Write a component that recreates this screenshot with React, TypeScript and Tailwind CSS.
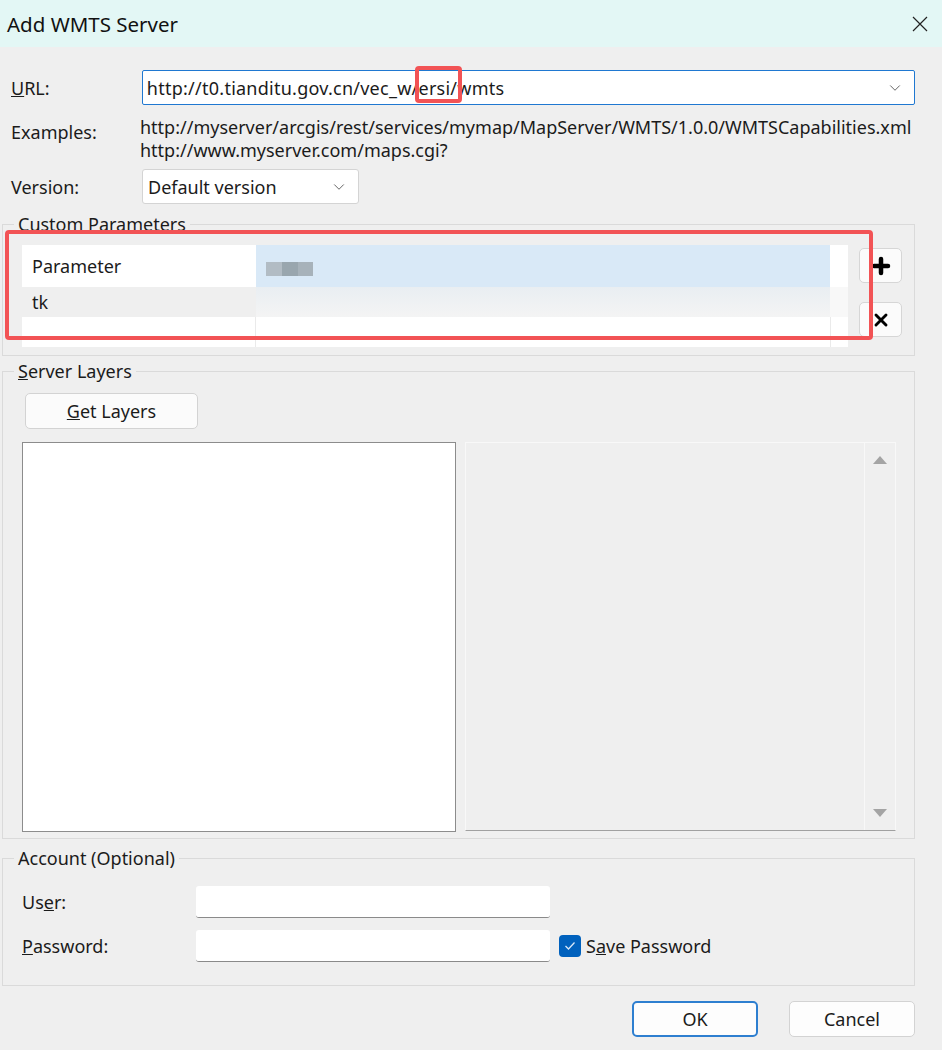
import { ChevronDown, Plus, X } from 'lucide-react';

const font = "font-['Noto_Sans','Open_Sans',sans-serif]";

function Group({ title, className, children }: { title: React.ReactNode; className?: string; children: React.ReactNode }) {
  return (
    <fieldset className={`border border-[#dadada] px-0 ${className ?? ''}`}>
      <legend className="ml-[11px] px-[4px] text-[18px] leading-[20px]">{title}</legend>
      {children}
    </fieldset>
  );
}

export default function App() {
  return (
    <div className={`w-[942px] h-[1050px] bg-[#efefef] text-[#1b1b1b] text-[18px] leading-[24px] ${font} overflow-hidden`}>
      {/* title bar */}
      <div className="h-[47px] bg-[#e3f7f5] flex items-center justify-between pl-[7px] pr-[14px]">
        <span className="text-[20.5px] text-[#111]">Add WMTS Server</span>
        <svg width="16" height="16" viewBox="0 0 16 16" className="text-[#222]">
          <path d="M1 1 L15 15 M15 1 L1 15" stroke="currentColor" strokeWidth="1.2" fill="none" />
        </svg>
      </div>

      <div className="relative pl-[2px] pr-[27px] pt-[23px]">
        {/* url */}
        <div className="flex items-center">
          <span className="w-[140px] pl-[9px]"><u>U</u>RL:</span>
          <div className="w-[774px] h-[35px] bg-white border border-[#1f78d1] rounded-[2px] flex items-center justify-between pl-[4px] pr-[10px]">
            <span className="tracking-[0.25px]">http://t0.tianditu.gov.cn/vec_w/ersi/wmts</span>
            <ChevronDown size={18} strokeWidth={1.2} className="text-[#555]" />
          </div>
        </div>

        {/* examples */}
        <div className="flex mt-[11px]">
          <span className="w-[138px] pl-[9px] pt-[4px]">Examples:</span>
          <div className="leading-[23px]">
            <div>http://myserver/arcgis/rest/services/mymap/MapServer/WMTS/1.0.0/WMTSCapabilities.xml</div>
            <div>http://www.myserver.com/maps.cgi?</div>
          </div>
        </div>

        {/* version */}
        <div className="flex items-center mt-[7px]">
          <span className="w-[140px] pl-[9px]">Version:</span>
          <div className="w-[217px] h-[35px] bg-white border border-[#d4d4d4] rounded-[3px] flex items-center justify-between pl-[5px] pr-[10px]">
            <span>Default version</span>
            <ChevronDown size={18} strokeWidth={1.2} className="text-[#555]" />
          </div>
        </div>

        <Group title="Custom Parameters" className="mt-[10px] pb-[8px]">
          <div className="flex items-start pl-[19px] pt-[11px]">
            <div className="w-[826px] h-[102px] flex flex-col">
              <div className="flex h-[42px]">
                <div className="w-[234px] bg-white flex items-center pl-[10px]">Parameter</div>
                <div className="w-[574px] bg-[#d9e9f7] pl-[10px] pt-[17px]">
                  <div className="flex">
                    <div className="w-[16px] h-[14px] bg-[#b2bcc4]" />
                    <div className="w-[16px] h-[14px] bg-[#99a6ae]" />
                    <div className="w-[15px] h-[14px] bg-[#a7b2ba]" />
                  </div>
                </div>
                <div className="w-[18px] bg-white" />
              </div>
              <div className="flex h-[30px]">
                <div className="w-[234px] bg-[#efefef] flex items-center pl-[10px]">tk</div>
                <div className="w-[574px] bg-gradient-to-b from-[#e9eef2] to-[#f4f4f4]" />
                <div className="w-[18px] bg-[#f8f8f8]" />
              </div>
              <div className="flex h-[30px]">
                <div className="w-[234px] bg-white border-r border-[#eaeaea]" />
                <div className="w-[574px] bg-white" />
                <div className="w-[18px] bg-white border-l border-[#eaeaea]" />
              </div>
            </div>
            <div className="ml-[11px] mt-[3px] flex flex-col gap-[19px]">
              <button className="w-[43px] h-[35px] bg-[#fbfbfb] border border-[#d6d6d6] rounded-[5px] flex items-center justify-center">
                <Plus size={24} strokeWidth={4.5} className="text-black" />
              </button>
              <button className="w-[43px] h-[35px] bg-[#fbfbfb] border border-[#d6d6d6] rounded-[5px] flex items-center justify-center">
                <X size={20} strokeWidth={3.5} className="text-black" />
              </button>
            </div>
          </div>
        </Group>

        <Group title={<><u>S</u>erver Layers</>} className="mt-[5px] pb-[6px]">
          <div className="pl-[22px] pt-[12px]">
            <button className="w-[173px] h-[36px] bg-[#fbfbfb] border border-[#d3d3d3] rounded-[5px]">
              <u>G</u>et Layers
            </button>
          </div>
          <div className="flex pl-[19px] mt-[13px] gap-[9px]">
            <div className="w-[434px] h-[390px] bg-white border border-[#8c8c8c]" />
            <div className="w-[431px] h-[389px] border border-[#f8f8f8] border-b-[#a0a0a0] flex justify-end">
              <div className="w-[31px] border-l border-[#f8f8f8] flex flex-col items-center justify-between py-[12px]">
                <svg width="16" height="10" viewBox="0 0 16 10"><path d="M8 1 L15 9 H1 Z" fill="#a4a4a4" /></svg>
                <svg width="16" height="10" viewBox="0 0 16 10"><path d="M1 1 H15 L8 9 Z" fill="#a4a4a4" /></svg>
              </div>
            </div>
          </div>
        </Group>

        <Group title="Account (Optional)" className="mt-[9px] pb-[23px]">
          <div className="flex flex-col gap-[12px] pl-[19px] pt-[18px]">
            <div className="flex items-center">
              <span className="w-[174px]">Us<u>e</u>r:</span>
              <div className="w-[354px] h-[32px] bg-white rounded-[3px] border-b border-[#8a8a8a]" />
            </div>
            <div className="flex items-center">
              <span className="w-[174px]"><u>P</u>assword:</span>
              <div className="w-[354px] h-[32px] bg-white rounded-[3px] border-b border-[#8a8a8a]" />
              <div className="ml-[9px] w-[22px] h-[22px] rounded-[4px] bg-[#0061bd] flex items-center justify-center">
                <svg width="12" height="10" viewBox="0 0 12 10"><path d="M1.5 5 L4.5 8 L10.5 1.5" stroke="#d8e8f8" strokeWidth="1.3" fill="none" /></svg>
              </div>
              <span className="ml-[5px]">S<u>a</u>ve Password</span>
            </div>
          </div>
        </Group>

        <div className="flex justify-end gap-[31px] mt-[15px]">
          <button className="w-[126px] h-[36px] bg-[#fdfdfd] border-2 border-[#2e7fd0] rounded-[5px]">OK</button>
          <button className="w-[126px] h-[36px] bg-[#fdfdfd] border border-[#d3d3d3] rounded-[5px]">Cancel</button>
        </div>

        {/* red highlight marks */}
        <div className="absolute left-[415px] top-[19px] w-[47px] h-[37px] border-4 border-[#f25355] rounded-[4px]" />
        <div className="absolute left-[5px] top-[183px] w-[868px] h-[110px] border-4 border-[#f25355] rounded-[4px]" />
      </div>
    </div>
  );
}
